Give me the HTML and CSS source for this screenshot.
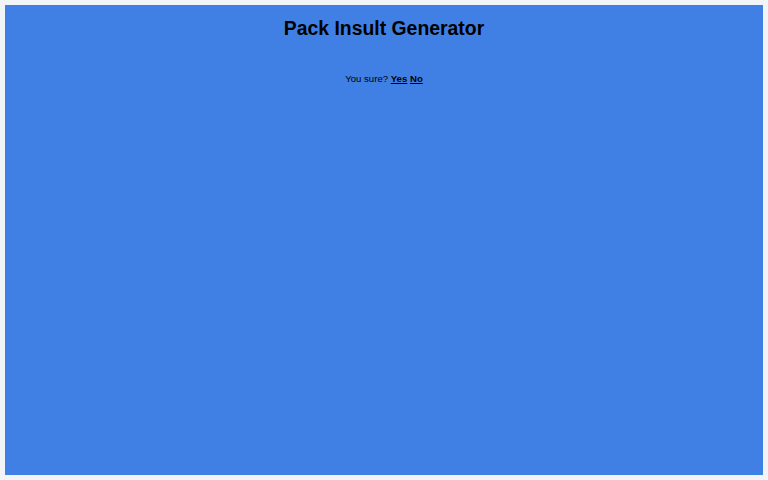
FILE: index.html
```html
<!DOCTYPE html>
<html lang="en">
<head>
  <meta charset="UTF-8" />
  <meta name="viewport" content="width=device-width, initial-scale=1" />
  <title>Pack Insult Generator</title>
  <link rel="stylesheet" href="styles.css">
</head>
<body>
  <div class="page">
    <h1>Pack Insult Generator</h1>
    <p class="confirm">
      You sure? <a href="#" class="choice">Yes</a> <a href="#" class="choice">No</a>
    </p>
  </div>
</body>
</html>
```

FILE: styles.css
```css
html {
  background-color: #f2f5f8;
  height: 100%;
}

body {
  margin: 5px;
  height: calc(100% - 10px);
  font-family: 'Liberation Sans', Arial, sans-serif;
  color: #000;
}

.page {
  height: 100%;
  background-color: #4080e4;
  text-align: center;
  padding-top: 1px;
  box-sizing: border-box;
}

h1 {
  font-size: 19.4px;
  font-weight: bold;
  margin: 10px 0 0 0;
  line-height: 24px;
}

.confirm {
  font-size: 9.6px;
  margin: 33px 0 0 0;
}

.choice {
  color: #000;
  font-weight: bold;
  text-decoration: underline;
}
```
